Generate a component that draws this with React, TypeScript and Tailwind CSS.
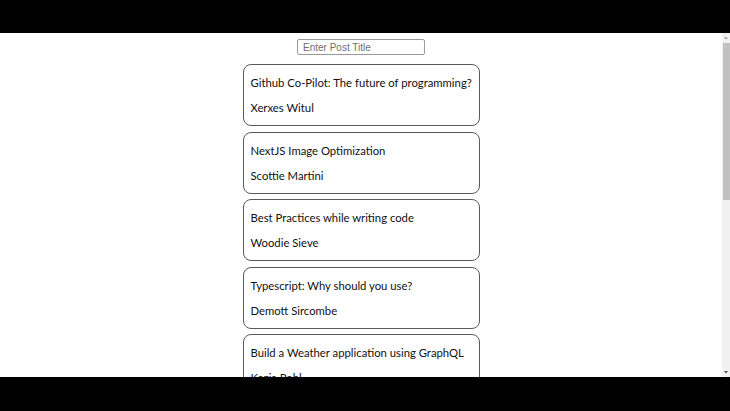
import React from "react";

const posts = [
  { title: "Github Co-Pilot: The future of programming?", author: "Xerxes Witul" },
  { title: "NextJS Image Optimization", author: "Scottie Martini" },
  { title: "Best Practices while writing code", author: "Woodie Sieve" },
  { title: "Typescript: Why should you use?", author: "Demott Sircombe" },
  { title: "Build a Weather application using GraphQL", author: "Kezia Pohl" },
  { title: "React Server Components", author: "Alva Brisley" },
];

export default function App() {
  return (
    <div className="w-[730px] h-[411px] bg-black flex flex-col overflow-hidden">
      <div className="h-[33px] shrink-0 bg-black" />
      <div className="h-[344px] shrink-0 bg-white flex overflow-hidden">
        <div className="flex-1 flex flex-col items-center overflow-hidden">
          <input
            placeholder="Enter Post Title"
            className="mt-[6px] w-[128px] h-[16px] border border-[#9a9a9a] rounded-[2px] px-[5px] text-[10px] leading-[14px] placeholder:text-[#6f6f6f] outline-none shrink-0"
            style={{ fontFamily: '"Liberation Sans", Arial, sans-serif' }}
          />
          <div
            className="mt-[9px] flex flex-col gap-[5.5px] w-[237px]"
            style={{ fontFamily: 'Lato, "Noto Sans", sans-serif' }}
          >
            {posts.map((p) => (
              <div
                key={p.title}
                className="shrink-0 h-[62px] border border-[#5a5a5a] rounded-[8px] px-[7px] py-[11px] flex flex-col gap-[12px] text-[11.3px] leading-[13px] text-[#111] whitespace-nowrap"
              >
                <div>{p.title}</div>
                <div>{p.author}</div>
              </div>
            ))}
          </div>
        </div>
        <div className="w-[8px] shrink-0 bg-[#f1f1f1] flex flex-col items-center">
          <svg width="8" height="9" viewBox="0 0 8 9" className="shrink-0">
            <path d="M2 6 L4 3.5 L6 6 Z" fill="#a3a3a3" />
          </svg>
          <div className="mt-[1px] w-[7px] h-[157px] bg-[#c1c1c1]" />
          <div className="flex-1" />
          <svg width="8" height="9" viewBox="0 0 8 9" className="shrink-0">
            <path d="M2 3 L4 5.5 L6 3 Z" fill="#505050" />
          </svg>
        </div>
      </div>
      <div className="flex-1 bg-black" />
    </div>
  );
}
